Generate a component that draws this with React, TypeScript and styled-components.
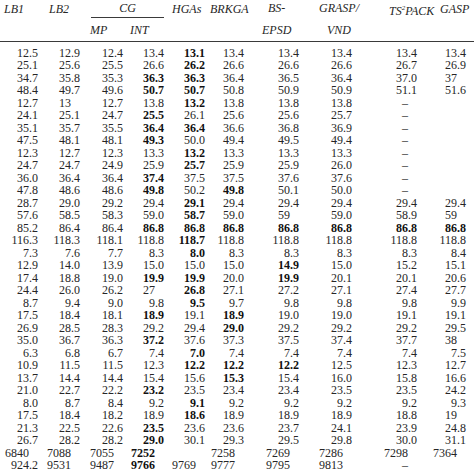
import React, {FC, ReactElement} from 'react';
import styled, {createGlobalStyle} from 'styled-components';

const GlobalStyle = createGlobalStyle`
html, body {
  margin: 0;
  padding: 0;
  background: #ffffff;
}
body {
  font-family: 'Liberation Serif', 'Times New Roman', Times, serif;
  color: #262626;
}
`

const Page = styled.div`
width: 474px;
height: 474px;
overflow: hidden;
background: #ffffff;
`

const Head = styled.div`
display: grid;
grid-template-columns: 45px 41px 40px 42px 38px 52px 57px 70px 51px 1fr;
grid-template-rows: 18px 23px;
padding-left: 4px;
border-bottom: 1.5px solid #3a3a3a;
font-style: italic;
font-size: 12px;
`

const HeadCell = styled.div<{$col: number; $span?: number; $row?: number; $rows?: number}>`
grid-column: ${p => p.$col} / span ${p => p.$span || 1};
grid-row: ${p => p.$row || 1} / span ${p => p.$rows || 1};
display: flex;
align-items: ${p => (p.$rows ? 'flex-start' : 'center')};
line-height: 14px;
`

const Group = styled(HeadCell)`
justify-content: center;
margin-left: 1px;
margin-right: 8px;
border-bottom: 1px solid #3a3a3a;
align-items: flex-start;
padding-top: 1px;
`

const Stack = styled.div`
display: flex;
flex-direction: column;
align-items: center;
gap: 8px;
padding-top: 1px;
`

const Sup = styled.sup`
font-size: 7px;
vertical-align: 5px;
`

const Body = styled.div`
display: grid;
grid-template-columns: 38px 42px 43px 41px 41px 39px 55px 53px 65px 49px;
grid-auto-rows: 12.5px;
padding-top: 4.5px;
font-size: 12px;
line-height: 12.5px;
`

const Cell = styled.div<{$bold: boolean}>`
text-align: right;
white-space: nowrap;
font-weight: ${p => (p.$bold ? 700 : 400)};
color: ${p => (p.$bold ? '#111111' : '#262626')};
`

const Ghost = styled.span`
visibility: hidden;
`

const data: string[] = [
  '12.5 12.9 12.4 13.4 *13.1 13.4 13.4 13.4 13.4 13.4',
  '25.1 25.6 25.5 26.6 *26.2 26.6 26.6 26.6 26.7 26.9',
  '34.7 35.8 35.3 *36.3 *36.3 36.4 36.5 36.4 37.0 37',
  '48.4 49.7 49.6 *50.7 *50.7 50.8 50.9 50.9 51.1 51.6',
  '12.7 13 12.7 13.8 *13.2 13.8 13.8 13.8 – _',
  '24.1 25.1 24.7 *25.5 26.1 25.6 25.6 25.7 – _',
  '35.1 35.7 35.5 *36.4 *36.4 36.6 36.8 36.9 – _',
  '47.5 48.1 48.1 *49.3 50.0 49.4 49.5 49.4 – _',
  '12.3 12.7 12.3 13.3 *13.2 13.3 13.3 13.3 – _',
  '24.7 24.7 24.9 25.9 *25.7 25.9 25.9 26.0 – _',
  '36.0 36.4 36.4 *37.4 37.5 37.5 37.6 37.6 – _',
  '47.8 48.6 48.6 *49.8 50.2 *49.8 50.1 50.0 – _',
  '28.7 29.0 29.2 29.4 *29.1 29.4 29.4 29.4 29.4 29.4',
  '57.6 58.5 58.3 59.0 *58.7 59.0 59 59.0 58.9 59',
  '85.2 86.4 86.4 *86.8 *86.8 *86.8 *86.8 *86.8 *86.8 *86.8',
  '116.3 118.3 118.1 118.8 *118.7 118.8 118.8 118.8 118.8 118.8',
  '7.3 7.6 7.7 8.3 *8.0 8.3 8.3 8.3 8.3 8.4',
  '12.9 14.0 13.9 15.0 15.0 15.0 *14.9 15.0 15.2 15.1',
  '17.4 18.8 19.0 *19.9 *19.9 20.0 *19.9 20.1 20.1 20.6',
  '24.4 26.0 26.2 27 *26.8 27.1 27.2 27.1 27.4 27.7',
  '8.7 9.4 9.0 9.8 *9.5 9.7 9.8 9.8 9.8 9.9',
  '17.5 18.4 18.1 *18.9 19.1 *18.9 19.0 19.0 19.1 19.1',
  '26.9 28.5 28.3 29.2 29.4 *29.0 29.2 29.2 29.2 29.5',
  '35.0 36.7 36.3 *37.2 37.6 37.3 37.5 37.4 37.7 38',
  '6.3 6.8 6.7 7.4 *7.0 7.4 7.4 7.4 7.4 7.5',
  '10.9 11.5 11.5 12.3 *12.2 *12.2 *12.2 12.5 12.3 12.7',
  '13.7 14.4 14.4 15.4 15.6 *15.3 15.4 16.0 15.8 16.6',
  '21.0 22.7 22.2 *23.2 23.5 23.4 23.4 23.5 23.5 24.2',
  '8.0 8.7 8.4 9.2 *9.1 9.2 9.2 9.2 9.2 9.3',
  '17.5 18.4 18.2 18.9 *18.6 18.9 18.9 18.9 18.8 19',
  '21.3 22.5 22.6 *23.5 23.6 23.6 23.7 24.1 23.9 24.8',
  '26.7 28.2 28.2 *29.0 30.1 29.3 29.5 29.8 30.0 31.1',
  '6840 7088 7055 *7252 _ 7258 7269 7286 7298 7364',
  '924.2 9531 9487 *9766 9769 9777 9795 9813 – _',
]

const Value: FC<{raw: string}> = ({raw}): ReactElement => {
  const bold = raw.startsWith('*')
  const text = bold ? raw.slice(1) : raw
  if (text === '_') return <Cell $bold={false} />
  return (
    <Cell $bold={bold}>
      {text}
      {text.includes('.') ? null : <Ghost>.0</Ghost>}
    </Cell>
  )
}

const App: FC = (): ReactElement => {
  return (
    <Page>
      <GlobalStyle />
      <Head>
        <HeadCell $col={1}>LB1</HeadCell>
        <HeadCell $col={2}>LB2</HeadCell>
        <Group $col={3} $span={2}>CG</Group>
        <HeadCell $col={3} $row={2}>MP</HeadCell>
        <HeadCell $col={4} $row={2}>INT</HeadCell>
        <HeadCell $col={5}>HGAs</HeadCell>
        <HeadCell $col={6}>BRKGA</HeadCell>
        <HeadCell $col={7} $rows={2}>
          <Stack>
            <span>BS-</span>
            <span>EPSD</span>
          </Stack>
        </HeadCell>
        <HeadCell $col={8} $rows={2}>
          <Stack>
            <span>GRASP/</span>
            <span>VND</span>
          </Stack>
        </HeadCell>
        <HeadCell $col={9}>
          <span>
            TS<Sup>2</Sup>PACK
          </span>
        </HeadCell>
        <HeadCell $col={10}>GASP</HeadCell>
      </Head>
      <Body>
        {data.map((line, i) =>
          line.split(' ').map((raw, j) => <Value key={`${i}-${j}`} raw={raw} />)
        )}
      </Body>
    </Page>
  )
}

export default App;
